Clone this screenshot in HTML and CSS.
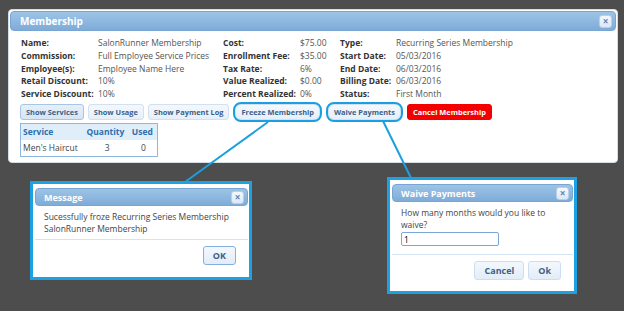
FILE: index.html
```html
<!DOCTYPE html>
<html lang="en">
<head>
    <meta charset="UTF-8">
    <meta name="viewport" content="width=device-width, initial-scale=1.0">
    <title>Membership</title>
    <link rel="stylesheet" href="styles.css">
</head>
<body>

<div class="desk">
    <div class="window membership">
        <div class="titlebar">
            <span class="title big">Membership</span>
            <span class="close">&times;</span>
        </div>
        <div class="content">
            <div class="details">
                <b>Name:</b><span>SalonRunner Membership</span>
                <b>Cost:</b><span>$75.00</span>
                <b>Type:</b><span>Recurring Series Membership</span>

                <b>Commission:</b><span>Full Employee Service Prices</span>
                <b>Enrollment Fee:</b><span>$35.00</span>
                <b>Start Date:</b><span>05/03/2016</span>

                <b>Employee(s):</b><span>Employee Name Here</span>
                <b>Tax Rate:</b><span>6%</span>
                <b>End Date:</b><span>06/03/2016</span>

                <b>Retail Discount:</b><span>10%</span>
                <b>Value Realized:</b><span>$0.00</span>
                <b>Billing Date:</b><span>06/03/2016</span>

                <b>Service Discount:</b><span>10%</span>
                <b>Percent Realized:</b><span>0%</span>
                <b>Status:</b><span>First Month</span>
            </div>
            <div class="actions">
                <button class="btn active">Show Services</button>
                <button class="btn">Show Usage</button>
                <button class="btn">Show Payment Log</button>
                <button class="btn marked">Freeze Membership</button>
                <button class="btn marked">Waive Payments</button>
                <button class="btn danger">Cancel Membership</button>
            </div>
            <table class="services">
                <thead>
                    <tr><th>Service</th><th>Quantity</th><th>Used</th></tr>
                </thead>
                <tbody>
                    <tr><td>Men's Haircut</td><td class="num">3</td><td class="num">0</td></tr>
                </tbody>
            </table>
        </div>
    </div>

    <svg class="callouts" width="624" height="311" viewBox="0 0 624 311">
        <line x1="268" y1="122" x2="185" y2="182" />
        <line x1="383" y1="121" x2="411" y2="178" />
    </svg>

    <div class="window popup message-box">
        <div class="titlebar small">
            <span class="title">Message</span>
            <span class="close">&times;</span>
        </div>
        <div class="popup-body">
            Sucessfully froze Recurring Series Membership<br>
            SalonRunner Membership
        </div>
        <div class="popup-foot">
            <button class="dlg-btn focus">OK</button>
        </div>
    </div>

    <div class="window popup waive-box">
        <div class="titlebar small">
            <span class="title">Waive Payments</span>
            <span class="close">&times;</span>
        </div>
        <div class="popup-body">
            How many months would you like to<br>
            waive?
            <input class="months" type="text" value="1">
        </div>
        <div class="popup-foot">
            <button class="dlg-btn">Cancel</button>
            <button class="dlg-btn">Ok</button>
        </div>
    </div>
</div>

</body>
</html>
```

FILE: styles.css
```css
body {
    margin: 0;
    background-color: #4c4d4c;
    font-family: "Open Sans", "DejaVu Sans", sans-serif;
    font-size: 8.5px;
    color: #3a3a3a;
}
.desk {
    position: relative;
    width: 624px;
    height: 311px;
    overflow: hidden;
}
.window {
    position: absolute;
    background-color: #fff;
    box-sizing: border-box;
}
.membership {
    left: 8px;
    top: 9px;
    width: 610px;
    height: 154px;
    border: 1px solid #d4dde6;
    border-radius: 4px;
    padding: 1px;
}
.titlebar {
    display: flex;
    align-items: center;
    justify-content: space-between;
    height: 20px;
    box-sizing: border-box;
    padding: 0 3px 0 9px;
    background: linear-gradient(#9dc4e6, #7eacd8);
    border: 1px solid #78a5d2;
    border-radius: 4px;
}
.titlebar.small {
    height: 18px;
    padding-left: 8px;
}
.title {
    color: #fff;
    font-weight: bold;
    font-size: 9px;
}
.title.big {
    font-size: 10px;
}
.close {
    width: 11px;
    height: 11px;
    line-height: 10px;
    text-align: center;
    font-size: 10px;
    font-weight: bold;
    color: #5a87b8;
    background: linear-gradient(#f4f8fc, #dce8f4);
    border: 1px solid #b9d0e8;
    border-radius: 3px;
}
.content {
    padding: 6px 11px 0 11px;
}
.details {
    display: grid;
    grid-template-columns: 77px 125px 77px 40px 56px auto;
    line-height: 12.8px;
    white-space: nowrap;
}
.details b {
    color: #333;
}
.details span {
    color: #555;
}
.actions {
    display: flex;
    gap: 4px;
    margin-top: 3px;
    margin-left: -1px;
}
.btn {
    height: 16px;
    padding: 0 5px;
    font-family: inherit;
    font-size: 7.4px;
    font-weight: bold;
    color: #3c5f86;
    background: linear-gradient(#f3f8fd, #e6eff9);
    border: 1px solid #d3e1ef;
    border-radius: 3px;
}
.btn.active {
    background: linear-gradient(#e6eff9, #d6e5f4);
    border-color: #a9c5e3;
}
.btn.marked {
    margin: 0 2px;
    outline: 2px solid #1b9fe0;
    border-radius: 6px;
}
.btn.danger {
    color: #fff;
    background: #f50000;
    border-color: #f50000;
}
.services {
    margin-top: 3px;
    margin-left: -1px;
    width: 138px;
    border-collapse: collapse;
    border: 1px solid #8fb8df;
    font-size: 8.5px;
}
.services th {
    height: 16px;
    padding: 0 2px;
    text-align: left;
    color: #2f6fac;
    background-color: #e0eefa;
}
.services td {
    height: 16px;
    padding: 0 2px;
    color: #444;
}
.services .num {
    text-align: center;
}
.callouts {
    position: absolute;
    left: 0;
    top: 0;
    pointer-events: none;
}
.callouts line {
    stroke: #1b9fe0;
    stroke-width: 2;
}
.popup {
    border: 3px solid #1ca1e2;
    padding: 4px 1px 0 2px;
}
.message-box {
    left: 30px;
    top: 181px;
    width: 222px;
    height: 99px;
}
.waive-box {
    left: 387px;
    top: 177px;
    width: 190px;
    height: 117px;
}
.popup-body {
    padding: 5px 9px 0 9px;
    line-height: 12px;
    color: #444;
    height: 28px;
    border-bottom: 1px solid #d4e3f1;
}
.waive-box .popup-body {
    height: 47px;
    padding-top: 5px;
    padding-left: 9px;
}
.months {
    display: block;
    width: 98px;
    height: 14px;
    box-sizing: border-box;
    margin-top: 1px;
    padding: 0 2px;
    font-family: inherit;
    font-size: 8.5px;
    border: 1px solid #7aa7d8;
    border-radius: 2px;
}
.popup-foot {
    display: flex;
    justify-content: flex-end;
    gap: 4px;
    padding: 6px 12px 0 0;
}
.waive-box .popup-foot {
    padding-top: 6px;
    padding-right: 12px;
}
.dlg-btn {
    height: 19px;
    padding: 0 9px;
    font-family: inherit;
    font-size: 9px;
    font-weight: bold;
    color: #3c5f86;
    background: linear-gradient(#f3f8fd, #e2edf8);
    border: 1px solid #cfdeee;
    border-radius: 3px;
}
.dlg-btn.focus {
    border-color: #86b0dc;
}
```
